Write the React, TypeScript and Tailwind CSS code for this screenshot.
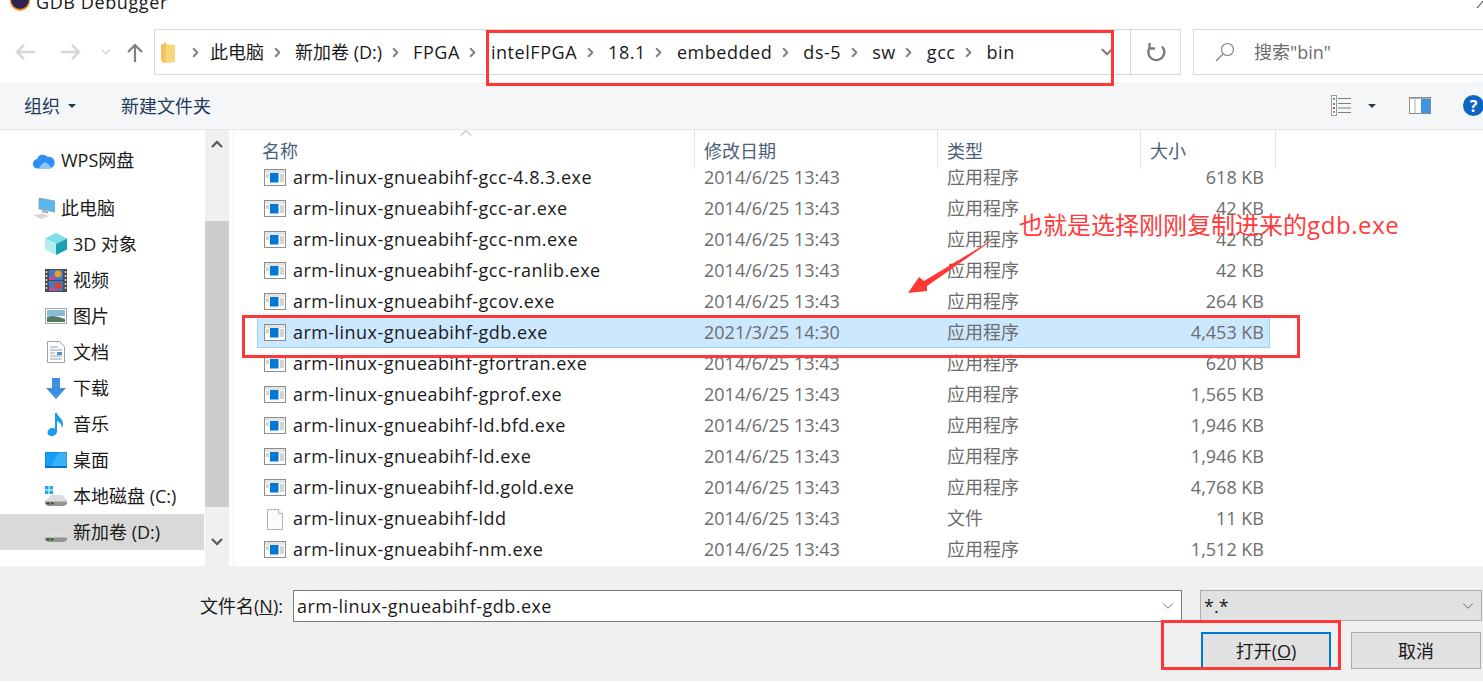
import { ChevronDown, ChevronRight } from "lucide-react";

const FONT = "font-['Open_Sans','Noto_Sans_CJK_SC',sans-serif]";

type FileRow = { name: string; date: string; type: string; size: string; plain?: boolean; selected?: boolean };

const OLD = "2014/6/25 13:43";
const APP = "应用程序";

const files: FileRow[] = [
  { name: "arm-linux-gnueabihf-gcc-4.8.3.exe", date: OLD, type: APP, size: "618 KB" },
  { name: "arm-linux-gnueabihf-gcc-ar.exe", date: OLD, type: APP, size: "42 KB" },
  { name: "arm-linux-gnueabihf-gcc-nm.exe", date: OLD, type: APP, size: "42 KB" },
  { name: "arm-linux-gnueabihf-gcc-ranlib.exe", date: OLD, type: APP, size: "42 KB" },
  { name: "arm-linux-gnueabihf-gcov.exe", date: OLD, type: APP, size: "264 KB" },
  { name: "arm-linux-gnueabihf-gdb.exe", date: "2021/3/25 14:30", type: APP, size: "4,453 KB", selected: true },
  { name: "arm-linux-gnueabihf-gfortran.exe", date: OLD, type: APP, size: "620 KB" },
  { name: "arm-linux-gnueabihf-gprof.exe", date: OLD, type: APP, size: "1,565 KB" },
  { name: "arm-linux-gnueabihf-ld.bfd.exe", date: OLD, type: APP, size: "1,946 KB" },
  { name: "arm-linux-gnueabihf-ld.exe", date: OLD, type: APP, size: "1,946 KB" },
  { name: "arm-linux-gnueabihf-ld.gold.exe", date: OLD, type: APP, size: "4,768 KB" },
  { name: "arm-linux-gnueabihf-ldd", date: OLD, type: "文件", size: "11 KB", plain: true },
  { name: "arm-linux-gnueabihf-nm.exe", date: OLD, type: APP, size: "1,512 KB" },
];

const crumbs = ["此电脑", "新加卷 (D:)", "FPGA", "intelFPGA", "18.1", "embedded", "ds-5", "sw", "gcc", "bin"];

function ExeIcon() {
  return (
    <svg width="22" height="17" viewBox="0 0 22 17" className="shrink-0">
      <rect x="0.5" y="0.5" width="21" height="16" fill="#fff" stroke="#8e8e8e" />
      <rect x="1" y="1" width="20" height="3" fill="#e4e4e4" />
      <rect x="6" y="4" width="8.5" height="9.5" fill="#0078d7" />
      <path d="M16 6h4M16 8h4M16 10h4M16 12h4M2 6h3M2 8h3" stroke="#a9a9a9" />
    </svg>
  );
}

function PlainFileIcon() {
  return (
    <svg width="22" height="22" viewBox="0 0 22 22" className="shrink-0">
      <path d="M3.5 1.5h11l4 4v16h-15z" fill="#fbfbfb" stroke="#b4b4b4" />
      <path d="M14.5 1.5v4h4" fill="#fff" stroke="#b4b4b4" />
    </svg>
  );
}

function DriveIcon({ windows }: { windows?: boolean }) {
  return (
    <svg width="22" height="22" viewBox="0 0 22 22" className="shrink-0">
      {windows && <path d="M0 1h3.5v3.500H0zM4.500 1H8v3.500H4.500zM0 5.500h3.500V9H0zM4.500 5.500H8V9H4.500z" fill="#25a5ee" />}
      <path d="M0 16l6-6h11l5 5v2H0z" fill="#dcdcdc" />
      <path d="M0 16.500h22v2.500L19 21H3l-3-2z" fill="#949494" />
      <rect x="1.500" y="17.500" width="7" height="1.800" fill="#333" />
      <rect x="4" y="17.500" width="2.500" height="1.800" fill="#39b54a" />
    </svg>
  );
}

function NavIcon({ kind }: { kind: string }) {
  switch (kind) {
    case "cloud":
      return (
        <svg width="22" height="17" viewBox="0 0 22 17" className="shrink-0">
          <path d="M5 16.500a4.700 4.700 0 0 1-.8-9.400A5.800 5.800 0 0 1 14.300 4.800a5.800 5.800 0 1 1 2.700 11.700z" fill="#2e8ff0" />
          <path d="M5 16.500c3-1 3-6.500 7.500-6 3 .3 3.500 3.200 6 5.200-.6.400-1 .800-1.500.800z" fill="#8cc8fa" />
        </svg>
      );
    case "pc":
      return (
        <svg width="22" height="22" viewBox="0 0 22 22" className="shrink-0">
          <path d="M6 1l16 3v11L6 12z" fill="#5cb6ee" stroke="#8a9aa5" strokeWidth="0.700" />
          <path d="M9 13l6 1.500v2L9 15z" fill="#9aa5ad" />
          <path d="M0 18l10-1.500 6 2.500-8 3z" fill="#d6d8da" />
        </svg>
      );
    case "cube":
      return (
        <svg width="22" height="22" viewBox="0 0 22 22" className="shrink-0">
          <path d="M11 0l11 5.500-11 5.500L0 5.500z" fill="#7fdde8" />
          <path d="M0 5.500l11 5.500v11L0 16.500z" fill="#b5ecf0" />
          <path d="M22 5.500L11 11v11l11-5.500z" fill="#1a9fb3" />
        </svg>
      );
    case "video":
      return (
        <svg width="22" height="23" viewBox="0 0 22 23" className="shrink-0">
          <rect width="22" height="23" fill="#4a4a4a" />
          <rect x="4" y="1" width="14" height="10" fill="#3d78c9" />
          <rect x="4" y="12" width="14" height="10" fill="#3d78c9" />
          <circle cx="13" cy="5" r="3.500" fill="#e6a21f" />
          <circle cx="13" cy="17" r="3.500" fill="#d9452e" />
          <path d="M4 9l4-3 3 5H4zM4 20l4-3 3 5H4z" fill="#c34a9a" />
          <path d="M1.500 2v19M20.500 2v19" stroke="#ddd" strokeWidth="1.500" strokeDasharray="2 2" />
        </svg>
      );
    case "image":
      return (
        <svg width="22" height="16" viewBox="0 0 22 16" className="shrink-0">
          <rect x="0.500" y="0.500" width="21" height="15" fill="#fff" stroke="#a5a5a5" />
          <rect x="2" y="2" width="18" height="6" fill="#8cbad9" />
          <path d="M2 9c5-2 10-1 18 2v3H2z" fill="#4f7c62" />
        </svg>
      );
    case "doc":
      return (
        <svg width="18" height="22" viewBox="0 0 18 22" className="shrink-0">
          <path d="M.500.500h12l5 5v16H.500z" fill="#fff" stroke="#a0a0a0" />
          <path d="M3 6h8M3 9h12M3 12h5M3 15h12M3 18h12" stroke="#8fa0b0" />
          <rect x="10" y="11" width="5" height="3" fill="#4f93cf" />
        </svg>
      );
    case "download":
      return (
        <svg width="20" height="21" viewBox="0 0 20 21" className="shrink-0">
          <path d="M6 0h8v10h6L10 21 0 10h6z" fill="#3d8fe0" />
        </svg>
      );
    case "music":
      return (
        <svg width="18" height="23" viewBox="0 0 18 23" className="shrink-0">
          <path d="M8 0h2c.500 4 6 5 6 11 0 1.500-.500 3-1.500 4 .500-4-2-6-4.500-7v10.500c0 2.500-2.500 4.500-5.500 4.500C2 23 .500 21.500.500 19.500.500 17 3 15 5.500 15c1 0 2 .200 2.500.500z" fill="#1b9bef" />
        </svg>
      );
    case "desktop":
      return (
        <svg width="22" height="16" viewBox="0 0 22 16" className="shrink-0">
          <rect width="22" height="16" fill="#0f6fc0" />
          <rect x="0.500" y="0.500" width="21" height="13.500" fill="#18a0f5" />
          <path d="M14 .500h7.500V14H6z" fill="#3bb0f7" />
        </svg>
      );
    case "c":
      return <DriveIcon windows />;
    default:
      return <DriveIcon />;
  }
}

const navItems = [
  { kind: "pc", label: "此电脑", top: true },
  { kind: "cube", label: "3D 对象" },
  { kind: "video", label: "视频" },
  { kind: "image", label: "图片" },
  { kind: "doc", label: "文档" },
  { kind: "download", label: "下载" },
  { kind: "music", label: "音乐" },
  { kind: "desktop", label: "桌面" },
  { kind: "c", label: "本地磁盘 (C:)" },
  { kind: "d", label: "新加卷 (D:)", selected: true },
];

function NavRow({ kind, label, top, selected }: { kind: string; label: string; top?: boolean; selected?: boolean }) {
  return (
    <div className={`flex h-9 items-center ${top ? "pl-[33px]" : "pl-[45px]"} ${selected ? "mr-px bg-[#d9d9d9]" : ""}`}>
      <div className="flex w-[22px] shrink-0 justify-center">
        <NavIcon kind={kind} />
      </div>
      <span className="ml-[6px] whitespace-nowrap text-[#1a1a1a]">{label}</span>
    </div>
  );
}

function HeaderCell({ label, className }: { label: string; className: string }) {
  return <div className={`flex h-full items-center border-r border-[#e5e5e5] pl-[9px] pt-[3px] text-[#4c607a] ${className}`}>{label}</div>;
}

export default function App() {
  return (
    <div className={`relative flex h-[682px] w-[1483px] flex-col overflow-hidden bg-white text-[18px] leading-none ${FONT}`}>
      {/* window title, cut off by the screenshot */}
      <div className="flex h-[29px] shrink-0 items-start pl-[10px]">
        <svg width="20" height="20" viewBox="0 0 20 20" className="-mt-[9px] shrink-0">
          <circle cx="10" cy="10" r="10" fill="#f7941e" />
          <circle cx="10" cy="9" r="9" fill="#2c2255" />
          <path d="M1 7h18" stroke="#d9d6e8" strokeWidth="1.200" />
        </svg>
        <span className="-mt-[7px] ml-[6px] tracking-[0.6px] text-[#1a1a1a]">GDB Debugger</span>
        <svg width="6" height="9" viewBox="0 0 6 9" className="ml-auto">
          <path d="M0 8L6 1" stroke="#222" />
        </svg>
      </div>

      {/* back / forward / address / search */}
      <div className="flex h-[46px] shrink-0 items-center">
        <div className="flex w-[154px] shrink-0 items-center pl-[14px] text-[#d6d6d6]">
          <svg width="22" height="18" viewBox="0 0 22 18">
            <path d="M21 9H3M10 2L3 9l7 7" fill="none" stroke="currentColor" strokeWidth="2.500" />
          </svg>
          <svg width="22" height="18" viewBox="0 0 22 18" className="ml-[24px]">
            <path d="M1 9h18M12 2l7 7-7 7" fill="none" stroke="currentColor" strokeWidth="2.500" />
          </svg>
          <ChevronDown size={14} strokeWidth={2.500} className="ml-[17px]" />
          <svg width="18" height="20" viewBox="0 0 18 20" className="ml-[13px] text-[#808080]">
            <path d="M9 20V3M2 10l7-7 7 7" fill="none" stroke="currentColor" strokeWidth="2.200" />
          </svg>
        </div>
        <div className="flex h-full w-[977px] shrink-0 items-center border border-[#d9d9d9] pl-[6px]">
          <svg width="15" height="21" viewBox="0 0 15 21" className="shrink-0">
            <path d="M0 3l5-1 9 1v17l-9 1H3z" fill="#f6d77e" />
            <path d="M0 3l5-3v18l-3 3-2-3z" fill="#eec45c" />
          </svg>
          <ChevronRight size={15} strokeWidth={3} className="ml-[12px] mr-[7px] shrink-0 text-[#808080]" />
          {crumbs.map((crumb, i) => (
            <div key={crumb} className="flex items-center">
              <span className={`whitespace-nowrap text-[#1a1a1a] ${i >= 2 ? "tracking-[0.55px]" : ""}`}>{crumb}</span>
              {i < crumbs.length - 1 && (
                <div className="flex w-[31px] justify-center pr-[5px]">
                  <ChevronRight size={15} strokeWidth={3} className="text-[#808080]" />
                </div>
              )}
            </div>
          ))}
          <ChevronDown size={18} strokeWidth={3} className="ml-auto mr-[14px] shrink-0 text-[#808080]" />
        </div>
        <div className="flex h-full w-[50px] shrink-0 items-center justify-center border-y border-r border-[#d9d9d9]">
          <svg width="20" height="20" viewBox="0 0 20 20">
            <path d="M4 4.500A8 8 0 1 0 16.500 6M16.500 1v5.500H11" fill="none" stroke="#7c7c7c" strokeWidth="2.400" transform="scale(-1 1) translate(-20 0)" />
          </svg>
        </div>
        <div className="ml-[12px] flex h-full flex-1 items-center border-y border-l border-[#d9d9d9] pl-[21px] text-[#6d6d6d]">
          <svg width="20" height="20" viewBox="0 0 20 20" className="shrink-0">
            <circle cx="12.500" cy="7.500" r="6" fill="none" stroke="#7c8a99" strokeWidth="1.200" />
            <path d="M8 12l-7 7" stroke="#7c8a99" strokeWidth="1.400" />
          </svg>
          <span className="ml-[19px]">搜索"bin"</span>
        </div>
      </div>
      <div className="h-[7px] shrink-0" />

      {/* command bar */}
      <div className="flex h-[48px] shrink-0 items-center border-b border-[#e6e6e6] bg-[#f5f6f7] pl-[24px] text-[#1e395b]">
        <span>组织</span>
        <span className="ml-[8px] h-0 w-0 border-x-[4px] border-t-[4px] border-x-transparent border-t-[#1e395b]" />
        <span className="ml-[45px]">新建文件夹</span>
        <svg width="21" height="21" viewBox="0 0 21 21" className="ml-auto">
          <rect x="0.500" y="0.500" width="5" height="20" fill="#fff" stroke="#9a9a9a" />
          <path d="M2 3h2v2H2z" fill="#4f93cf" />
          <path d="M2 8h2v2H2z" fill="#777" />
          <path d="M2 12h2v2H2z" fill="#d9352e" />
          <path d="M2 16h2v2H2z" fill="#8fb54a" />
          <path d="M7 3.500h13M7 8.500h13M7 13h13M7 17.500h13" stroke="#7f7f7f" />
        </svg>
        <span className="ml-[16px] h-0 w-0 border-x-[4px] border-t-[4px] border-x-transparent border-t-[#1e395b]" />
        <svg width="22" height="17" viewBox="0 0 22 17" className="ml-[33px]">
          <rect x="0.500" y="0.500" width="21" height="16" fill="#fff" stroke="#8c8c8c" />
          <rect x="12" y="2" width="9" height="14" fill="#3f94e3" />
          <path d="M6 1v15M1 1.500h20" stroke="#b0b0b0" />
        </svg>
        <div className="ml-[32px] -mr-[1px] flex h-[21px] w-[21px] shrink-0 items-center justify-center rounded-full bg-[#0a66c2] text-[16px] font-bold text-white">?</div>
      </div>

      {/* nav pane + file list */}
      <div className="flex h-[436px] shrink-0 overflow-hidden">
        <div className="w-[205px] shrink-0 pt-[12px]">
          <div className="mb-[12px]">
            <NavRow kind="cloud" label="WPS网盘" top />
          </div>
          {navItems.map((item) => (
            <NavRow key={item.label} kind={item.kind} label={item.label} top={item.top} selected={item.selected} />
          ))}
        </div>
        <div className="flex w-[24px] shrink-0 flex-col bg-[#f0f0f0]">
          <div className="flex h-[22px] items-center justify-center pt-[6px] text-[#606060]">
            <svg width="12" height="8" viewBox="0 0 12 8">
              <path d="M1 7l5-5 5 5" fill="none" stroke="currentColor" strokeWidth="2.400" />
            </svg>
          </div>
          <div className="mt-[69px] h-[286px] bg-[#cdcdcd]" />
          <div className="flex flex-1 items-center justify-center pt-[10px] text-[#606060]">
            <svg width="12" height="8" viewBox="0 0 12 8">
              <path d="M1 1l5 5 5-5" fill="none" stroke="currentColor" strokeWidth="2.400" />
            </svg>
          </div>
        </div>
        <div className="flex-1 pl-[4px]">
          <div className="h-full min-w-0 border-l border-[#f0f0f0]">
            <div className="relative z-10 flex h-[39px] bg-white pl-[19px]">
              <div className="relative flex h-full w-[442px] items-center border-r border-[#e5e5e5] pl-[9px] pt-[3px] text-[#4c607a]">
                名称
                <svg width="12" height="6" viewBox="0 0 12 6" className="absolute left-[207px] top-0">
                  <path d="M1 5.500l5-5 5 5" fill="none" stroke="#9a9a9a" />
                </svg>
              </div>
              <HeaderCell label="修改日期" className="w-[243px]" />
              <HeaderCell label="类型" className="w-[203px]" />
              <HeaderCell label="大小" className="w-[135px]" />
            </div>
            <div className="-mt-[7px] pl-[23px]">
              {files.map((file) => (
                <div
                  key={file.name}
                  className={`flex h-[31px] w-[1013px] items-center border pl-[6px] pr-[5px] ${file.selected ? "border-[#99d1ff] bg-[#cce8ff]" : "border-transparent"}`}
                >
                  <div className="flex w-[22px] shrink-0 justify-center">{file.plain ? <PlainFileIcon /> : <ExeIcon />}</div>
                  <span className="ml-[7px] w-[411px] shrink-0 whitespace-nowrap pb-[2px] tracking-[0.45px] text-[#1a1a1a]">{file.name}</span>
                  <span className="w-[243px] shrink-0 pb-[2px] text-[#6d6d6d]">{file.date}</span>
                  <span className="pb-[2px] text-[#6d6d6d]">{file.type}</span>
                  <span className="ml-auto pb-[2px] text-[#6d6d6d]">{file.size}</span>
                </div>
              ))}
            </div>
          </div>
        </div>
      </div>

      {/* file name + buttons */}
      <div className="h-[115px] shrink-0 bg-[#f0f0f0] pt-[24px]">
        <div className="flex items-start">
          <span className="mr-[6px] ml-[200px] flex h-[32px] w-[87px] items-center whitespace-nowrap text-[#1a1a1a]">
            文件名(<span className="underline">N</span>):
          </span>
          <div className="flex h-[32px] w-[889px] items-center border border-[#7a7a7a] bg-white pl-[3px] tracking-[0.45px] text-[#1a1a1a]">
            arm-linux-gnueabihf-gdb.exe
            <ChevronDown size={18} strokeWidth={1} className="ml-auto mr-[4px] text-[#444]" />
          </div>
          <div className="ml-[18px] flex h-[31px] w-[282px] items-center border border-[#adadad] bg-[#e1e1e1] pl-[3px] text-[#1a1a1a]">
            *.*
            <ChevronDown size={18} strokeWidth={1} className="ml-auto mr-[4px] text-[#444]" />
          </div>
        </div>
        <div className="mt-[10px] flex justify-end pr-[2px]">
          <div className="flex h-[37px] w-[130px] items-center justify-center border-2 border-[#0078d7] bg-[#e1e1e1] text-[#1a1a1a]">
            打开(<span className="underline">O</span>)
          </div>
          <div className="ml-[20px] flex h-[37px] w-[130px] items-center justify-center border border-[#adadad] bg-[#e1e1e1] text-[#1a1a1a]">取消</div>
        </div>
      </div>

      {/* red annotations drawn over the dialog */}
      <div className="absolute left-[486px] top-[30px] h-[56px] w-[628px] border-[3px] border-[#ff3737]" />
      <div className="absolute left-[242px] top-[315px] h-[43px] w-[1058px] border-[3px] border-[#ff3737]" />
      <div className="absolute left-[1161px] top-[620px] h-[50px] w-[180px] border-[3px] border-[#ff3737]" />
      <div className="absolute left-[1019px] top-[211px] whitespace-nowrap text-[24px] leading-[28px] text-[#ff3b3b]">
        也就是选择刚刚复制进来的<span className="tracking-[0.6px]">gdb.exe</span>
      </div>
      <svg width="92" height="60" viewBox="0 0 92 60" className="absolute left-[906px] top-[236px]">
        <path d="M91 1L18 45l-5-4L2 57l19-2 0-5 3-2z" fill="#ff3737" />
      </svg>
    </div>
  );
}
